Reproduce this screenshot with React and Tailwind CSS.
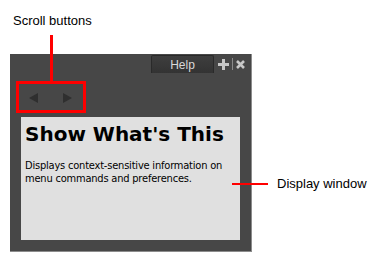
export default function App() {
  return (
    <div className="relative w-[383px] h-[262px] bg-white overflow-hidden" style={{ fontFamily: '"Liberation Sans", Arial, sans-serif' }}>
      <div className="pt-[54px] pl-[10px]">
        <div className="w-[242px] h-[198px] bg-[#474747] border-r border-b border-[#8c8c8c] flex flex-col">
          <div className="h-[21px] flex items-start pt-[1px] pl-[141px]">
            <div className="w-[63px] h-[18px] bg-gradient-to-b from-[#3e3e3e] to-[#333333] border border-[#2a2a2a] border-b-0 rounded-t-[2px] flex items-center justify-center text-[12px] text-[#d8d8d8]">Help</div>
            <div className="flex items-center h-[18px] ml-[4px]">
              <svg width="11" height="11" viewBox="0 0 11 11"><path d="M4 0h3v4h4v3H7v4H4V7H0V4h4z" fill="#c8c8c8" /></svg>
              <div className="w-px h-[12px] bg-[#8a8a8a] ml-[3px] mr-[3px]" />
              <svg width="9" height="9" viewBox="0 0 9 9"><path d="M1 1L8 8M8 1L1 8" stroke="#c8c8c8" strokeWidth="2.6" /></svg>
            </div>
          </div>
          <div className="h-[42px] flex items-center pl-[19px] gap-[25px] pt-[3px]">
            <svg width="9" height="10" viewBox="0 0 9 10"><path d="M9 0V10L0 5z" fill="#2f2f2f" /></svg>
            <svg width="9" height="10" viewBox="0 0 9 10"><path d="M0 0V10L9 5z" fill="#2f2f2f" /></svg>
          </div>
          <div className="ml-[11px] w-[219px] h-[123px] bg-[#e0e0e0] pl-[4px] pt-[4px] text-black">
            <div className="text-[20px] font-bold leading-[26px]" style={{ fontFamily: '"DejaVu Sans", Verdana, sans-serif' }}>Show What's This</div>
            <div className="mt-[12px] text-[11px] leading-[13px] tracking-[-0.2px]" style={{ fontFamily: '"DejaVu Sans Condensed", Tahoma, sans-serif' }}>
              Displays context-sensitive information on<br />menu commands and preferences.
            </div>
          </div>
        </div>
      </div>

      <div className="absolute left-[13px] top-[13px] text-[13px] leading-[16px] text-black">Scroll buttons</div>
      <div className="absolute left-[50px] top-[35px] w-[3px] h-[48px] bg-[#ff0000]" />
      <div className="absolute left-[16px] top-[81px] w-[70px] h-[32px] border-[3px] border-[#ff0000]" />

      <div className="absolute left-[232px] top-[183px] w-[36px] h-[2px] bg-[#ff0000]" />
      <div className="absolute left-[277px] top-[176px] text-[13px] leading-[16px] text-black">Display window</div>
    </div>
  );
}
